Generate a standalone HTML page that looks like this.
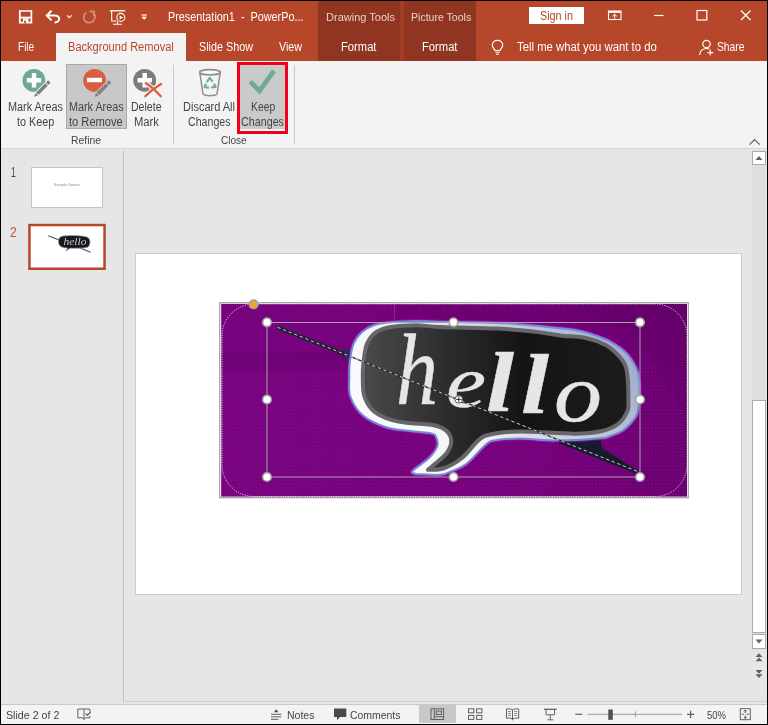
<!DOCTYPE html>
<html lang="en">
<head>
<meta charset="utf-8">
<title>Presentation1 - PowerPoint</title>
<style>
html,body{margin:0;padding:0;}
body{width:768px;height:725px;overflow:hidden;background:#000;font-family:"Liberation Sans",sans-serif;}
#win{position:relative;width:768px;height:725px;overflow:hidden;background:#000;}
#win div, #win svg, #win span{position:absolute;}
.t{white-space:pre;line-height:1;display:block;transform-origin:0 0;}
#titlebar{left:1px;top:1px;width:766px;height:60px;background:#B7472A;}
.ctx{top:1px;height:60px;background:#8F3521;}
#tabsel{left:56px;top:33px;width:130px;height:28px;background:#F3F3F3;}
#ribbon{left:1px;top:61px;width:766px;height:87px;background:#F3F3F3;border-bottom:1px solid #D6D6D6;}
#work{left:1px;top:149px;width:766px;height:555px;background:#E6E6E6;}
#status{left:1px;top:704px;width:766px;height:20px;background:#F3F3F3;border-top:1px solid #C9C9C9;box-sizing:border-box;}
.sep{width:1px;background:#C9C9C9;top:65px;height:79px;}
#selbtn{left:66px;top:64px;width:61px;height:65px;background:#C8C8C8;border:1px solid #A9A9A9;box-sizing:border-box;}
#keepbtn{left:240px;top:65px;width:45px;height:64px;background:#CACACA;}
#redbox{left:237px;top:62px;width:51px;height:72px;border:3px solid #F0001E;box-sizing:border-box;}
#signin{left:529px;top:7px;width:55px;height:17px;background:#fff;}
#divider{left:123px;top:151px;width:1px;height:551px;background:#C2C2C2;}
#hline{left:125px;top:701px;width:642px;height:1px;background:#CFCFCF;}
#slide{left:135px;top:253px;width:607px;height:342px;background:#fff;border:1px solid #CDCDCD;box-sizing:border-box;}
#thumb1{left:31px;top:167px;width:72px;height:41px;background:#fff;border:1px solid #C4C4C4;box-sizing:border-box;}
#thumb2{left:29px;top:225px;width:76px;height:44px;background:#fff;}
#vtrack{left:752px;top:150px;width:14px;height:500px;background:#DEDEDE;}
.sbtn{left:752px;width:14px;background:#fff;border:1px solid #ABABAB;box-sizing:border-box;}
#viewsel{left:418.5px;top:705px;width:37.5px;height:18px;background:#C8C8C8;}
#texts{left:0;top:0;width:768px;height:725px;will-change:transform;transform:translateZ(0);}
#win svg{will-change:transform;}

</style>
</head>
<body>
<div id="win">
<div id="titlebar"></div>
<div class="ctx" style="left:318px;width:81.5px;"></div>
<div class="ctx" style="left:399.5px;width:4px;background:#A43D26;"></div>
<div class="ctx" style="left:403.5px;width:72.5px;"></div>
<div id="tabsel"></div>
<div id="signin"></div>
<div id="ribbon"></div>
<div id="selbtn"></div>
<div id="keepbtn"></div>
<div id="redbox"></div>
<div class="sep" style="left:173px;"></div>
<div class="sep" style="left:294px;"></div>
<div id="work"></div>
<div id="divider"></div>
<div id="hline"></div>
<div id="thumb1"></div>
<div id="thumb2"></div>
<div id="slide"></div>
<div id="vtrack"></div>
<div class="sbtn" style="top:151px;height:14px;"></div>
<div class="sbtn" style="top:400px;height:233px;"></div>
<div class="sbtn" style="top:634px;height:14.5px;"></div>
<div id="status"></div>
<div id="viewsel"></div>
<svg id="icons" style="left:0;top:0" width="768" height="725" viewBox="0 0 768 725">
<!-- ===== Quick access toolbar ===== -->
<g fill="none" stroke="#fff" stroke-width="1.4">
<!-- save -->
<path d="M19.800,11 H31.400 V22.700 H19.800 Z" stroke-width="1.7"/>
<path d="M20,17.600 H31.200" stroke-width="1.8"/>
<path d="M23,18.500 H28.500 V23 H23 Z" fill="#fff" stroke="none"/>
<path d="M24.200,20.400 H25.900 V23.500 H24.200 Z" fill="#B7472A" stroke="none"/>
<!-- undo -->
<path d="M51.500,10.800 L46.800,15.600 L51.500,20.400" stroke-width="2"/>
<path d="M47,15.600 H54.500 C58,15.600 59.500,17.500 59.200,19.300 C59,21 57,22 54.600,22.600" stroke-width="2"/>
<!-- caret -->
<path d="M67,15.300 L69.300,17.600 L71.600,15.300" stroke-width="1.100"/>
<!-- start from beginning -->
<path d="M109.700,10.800 H125.200" stroke-width="1.300"/>
<path d="M111.700,11 V21 H116.500" stroke-width="1.100"/>
<circle cx="120.8" cy="17.4" r="4" stroke-width="1.1"/>
<path d="M117.500,21.500 V23.800 M113,24.300 H122" stroke-width="1.100"/>
<!-- customize -->
<path d="M141.500,15 H146.800" stroke-width="1.200"/>
</g>
<path d="M119.600,15.400 L123.100,17.400 L119.600,19.400 Z" fill="#fff"/>
<path d="M141.300,16.800 H147 L144.150,19.800 Z" fill="#fff"/>
<!-- redo (disabled) -->
<g fill="none" stroke="#CF8C79" stroke-width="1.8">
<path d="M86.500,12.500 C83.500,14.500 82.800,18.500 85,21 C87.500,23.500 92,23 94,20 C95.600,17.500 95,14.500 93,12.500"/>
<path d="M89.500,11.500 H94 V16"/>
</g>
<!-- ===== window controls ===== -->
<g fill="none" stroke="#fff" stroke-width="1.100">
<rect x="608.500" y="11" width="12.500" height="8.500"/>
<path d="M608.500,12 H621" stroke-width="1.800"/>
<path d="M614.700,18.500 V14.500 M612.500,16.300 L614.700,14.200 L616.900,16.300" stroke-width="1"/>
<path d="M654,15.500 H663.500" stroke-width="1.200"/>
<rect x="697" y="10.500" width="9.800" height="9.500" stroke-width="1.200"/>
<path d="M741,10.500 L750.500,20 M750.500,10.500 L741,20" stroke-width="1.200"/>
<!-- lightbulb -->
<path d="M495,50.500 C494.500,48.800 492.300,47.700 492.300,45 C492.300,42.200 494.600,40.300 497.500,40.300 C500.400,40.300 502.700,42.200 502.700,45 C502.700,47.700 500.500,48.800 500,50.500 Z" stroke-width="1.200"/>
<path d="M495.300,52.300 H499.700 M496,54.200 H499" stroke-width="1.100"/>
<!-- share -->
<circle cx="706.500" cy="44" r="3.700" stroke-width="1.200"/>
<path d="M699.600,55 C700,51.500 702.500,48.800 706,48.500 C707.500,48.400 708.500,48.700 709.500,49.200" stroke-width="1.200"/>
<path d="M710.300,49.800 V55.300 M707.500,52.600 H713.200" stroke-width="1.200"/>
</g>
<!-- ===== Ribbon icons ===== -->
<!-- Mark areas to keep -->
<g>
<circle cx="33.900" cy="80.400" r="11.400" fill="#6FA896"/>
<path d="M26.800,80.200 H41.200 M34,72.900 V87.600" stroke="#fff" stroke-width="4.400"/>
<g transform="translate(34.2,96.8) rotate(-45)">
<path d="M-0.8,-2.6 H22.3 V2.6 H-0.8 Z" fill="#F3F3F3" fill-opacity="0.0"/>
<path d="M3.4,-2.7 H22.4 V2.7 H3.4 L-1,0 Z" fill="#F3F3F3"/>
<path d="M0,0 L3.6,-1.75 V1.75 Z" fill="#7A7A7A"/>
<path d="M4.4,-1.75 H17.4 V1.75 H4.4 Z" fill="#808080"/>
<path d="M18.3,-1.75 H21.5 V1.75 H18.3 Z" fill="#808080"/>
</g>
</g>
<!-- Mark areas to remove -->
<g>
<circle cx="94.600" cy="80.400" r="11.400" fill="#DA5E41"/>
<path d="M87,80 H102" stroke="#fff" stroke-width="4.400"/>
<g transform="translate(94.8,96.8) rotate(-45)">
<path d="M-0.8,-2.6 H22.3 V2.6 H-0.8 Z" fill="#F3F3F3" fill-opacity="0.0"/>
<path d="M3.4,-2.7 H22.4 V2.7 H3.4 L-1,0 Z" fill="#C8C8C8"/>
<path d="M0,0 L3.6,-1.75 V1.75 Z" fill="#7A7A7A"/>
<path d="M4.4,-1.75 H17.4 V1.75 H4.4 Z" fill="#808080"/>
<path d="M18.3,-1.75 H21.5 V1.75 H18.3 Z" fill="#808080"/>
</g>
</g>
<!-- Delete mark -->
<g>
<circle cx="144.700" cy="80.300" r="11.400" fill="#7C7C7C"/>
<path d="M137.500,80.200 H152 M144.700,72.900 V87.600" stroke="#fff" stroke-width="4.400"/>
<path d="M146,83.300 C151,86.500 156,91 160.800,96.300 M161,84 C156,87 150,91.500 145.300,96.300" stroke="#F3F3F3" stroke-width="4.600" fill="none" stroke-linecap="round"/>
<path d="M146,83.300 C151,86.500 156,91 160.800,96.300 M161,84 C156,87 150,91.500 145.300,96.300" stroke="#DA5E41" stroke-width="2.300" fill="none" stroke-linecap="round"/>
</g>
<!-- Discard all changes (trash) -->
<g>
<path d="M199.800,72.500 L203,94 C205,96.300 215,96.300 217,94 L220.200,72.500 Z" fill="#F4F4F4" stroke="#8E8E8E" stroke-width="1.5"/>
<ellipse cx="210" cy="72.300" rx="10.300" ry="2.600" fill="#FAFAFA" stroke="#8E8E8E" stroke-width="1.8"/>
<g fill="none" stroke="#74AE9A" stroke-width="2.2" stroke-linejoin="round">
<path d="M206.800,82 L209.800,77.800 L212.600,81.600"/>
<path d="M213.800,83.600 L215.600,86.800 L211,87.500"/>
<path d="M209,87.600 L204.600,87.200 L206,83.600"/>
</g>
</g>
<!-- Keep changes (check) -->
<path d="M250.2,81.6 L259.6,90.8 L273.9,70.9" fill="none" stroke="#72A896" stroke-width="4.8"/>
<!-- collapse ribbon -->
<path d="M749.500,144.700 L754.600,139.500 L759.700,144.700" fill="none" stroke="#5E5E5E" stroke-width="1.200"/>
<!-- ===== scrollbar arrows ===== -->
<g fill="#606060">
<path d="M755.500,160 L759,156 L762.500,160 Z"/>
<path d="M755.500,639.500 L759,643.500 L762.500,639.500 Z"/>
<path d="M755.500,657 L759,653.300 L762.500,657 Z M755.500,661.300 L759,657.600 L762.500,661.300 Z"/>
<path d="M755.500,670 L759,673.700 L762.500,670 Z M755.500,674.200 L759,677.900 L762.500,674.200 Z"/>
</g>
<!-- ===== slide thumbnails ===== -->
<g>
<rect x="29.45" y="225.05" width="75.1" height="43.7" fill="#fff" stroke="#B7472A" stroke-width="2.5"/>
<path d="M48.300,235.800 L90.700,252.200" stroke="#222" stroke-width="0.9"/>
<path d="M62,236.200 C70,235 82,235.500 87,237 C91,238.500 91,246 87,247.500 C82,248.500 72,248.300 70,248.300 L66,251 L67.500,248 C63,248 59.500,247 58.500,243 C58,239.500 59,237 62,236.200 Z" fill="#16181c" stroke="#9AA6C8" stroke-width="0.8"/>
<text x="63.5" y="245.3" font-family="'Liberation Serif',serif" font-style="italic" font-size="9.5" fill="#c8c8c8" textLength="23" lengthAdjust="spacingAndGlyphs">hello</text>
</g>
<!-- ===== status bar icons ===== -->
<g fill="none" stroke="#606060" stroke-width="1">
<!-- spell check book -->
<path d="M84,709 V719.600 M84,709 H77.800 V717.800 H82.600 L84,719.400 L85.400,717.800 H89.800 V716 M84,709 H89.800 V711"/>
<path d="M85.700,713.500 L87.500,715.400 L91,711.500" stroke-width="1.2"/>
<!-- notes -->
<path d="M271,714.300 H281.400 M271,716.800 H281.400 M271,719.300 H278.500"/>
<!-- normal view -->
<rect x="431" y="708.800" width="12.600" height="10.700"/>
<path d="M434.300,709 V719.500 M434.300,716.700 H443.500"/>
<rect x="436.300" y="711" width="5.200" height="3.400"/>
<!-- sorter -->
<rect x="468.500" y="708.800" width="5.300" height="4"/><rect x="476.600" y="708.800" width="5.300" height="4"/>
<rect x="468.500" y="715.400" width="5.300" height="4"/><rect x="476.600" y="715.400" width="5.300" height="4"/>
<!-- reading view -->
<path d="M512.500,709.800 C510.500,708.700 508.500,708.600 506.500,709 V718.300 C508.500,717.900 510.500,718 512.500,719 Z M512.500,709.800 C514.500,708.700 516.500,708.600 518.700,709 V718.300 C516.500,717.900 514.500,718 512.500,719"/>
<path d="M508,711.500 H511 M508,713.500 H511 M508,715.500 H511 M514.200,711.500 H517.200 M514.200,713.500 H517.200 M514.200,715.500 H517.200" stroke-width="0.7"/>
<path d="M512.500,719 V720.300"/>
<!-- slideshow -->
<path d="M544,709.300 H556.600" stroke-width="1.300"/>
<path d="M546,709.500 V714.800 H554.600 V709.500"/>
<path d="M550.300,714.800 V719.400 M547.500,719.800 H553.100"/>
<!-- zoom -->
<path d="M575.300,714.300 H582.200" stroke-width="1.200"/>
<path d="M587.600,714.300 H682" stroke="#9A9A9A"/>
<path d="M635.300,711.300 V717.300" stroke="#9A9A9A"/>
<path d="M687,714.300 H694.200 M690.600,710.700 V717.900" stroke-width="1.200"/>
<!-- fit -->
<rect x="740.300" y="708.700" width="10" height="11"/>
</g>
<path d="M274,712.300 L276.200,709.300 L278.400,712.300 Z" fill="#4A4A4A"/>
<path d="M334,708.500 H346.300 V717 H340 L337,720.300 V717 H334 Z" fill="#4A4A4A"/>
<rect x="608.300" y="709.500" width="4.500" height="10.300" fill="#505050"/>
<g stroke="#4A4A4A" stroke-width="0.9" fill="none">
<path d="M745.300,710 V713 M744,711.300 L745.300,710 L746.600,711.300 M745.300,718.400 V715.400 M744,717.100 L745.300,718.400 L746.600,717.100 M741.600,714.200 H744 M749,714.200 H746.600"/>
</g>
</svg>

<svg id="pic" style="left:0;top:0" width="768" height="725" viewBox="0 0 768 725">
<defs>
<linearGradient id="bubg" x1="0" y1="0" x2="1" y2="0">
<stop offset="0" stop-color="#4a4a4a"/><stop offset="0.35" stop-color="#2a2a2a"/><stop offset="0.6" stop-color="#141414"/><stop offset="1" stop-color="#1c1c1c"/>
</linearGradient>
<linearGradient id="purp" x1="0" y1="0" x2="1" y2="0">
<stop offset="0" stop-color="#78037E"/><stop offset="0.7" stop-color="#74007A"/><stop offset="1" stop-color="#69006F"/>
</linearGradient>
<pattern id="dots" width="3.5" height="3.5" patternUnits="userSpaceOnUse"><circle cx="1" cy="1" r="0.9" fill="#9A14A2" fill-opacity="0.28"/></pattern>
<linearGradient id="rim" gradientUnits="userSpaceOnUse" x1="600" y1="320" x2="400" y2="450">
<stop offset="0" stop-color="#A3AFCC"/><stop offset="0.35" stop-color="#C9CEDC"/><stop offset="0.7" stop-color="#F2F3F7"/><stop offset="1" stop-color="#FAFAFC"/>
</linearGradient>
<clipPath id="picclip"><rect x="221.2" y="303.9" width="465.8" height="192.7"/></clipPath>
</defs>
<!-- picture frame -->
<rect x="219.7" y="302.7" width="468.6" height="195" fill="#fff" stroke="#9C9C9C" stroke-width="1.2"/>
<rect x="221.2" y="303.9" width="465.8" height="192.7" fill="url(#purp)"/>
<g clip-path="url(#picclip)">
<rect x="221" y="362" width="467" height="135" fill="url(#dots)"/>
<rect x="221" y="352" width="130" height="20" fill="#65006B" opacity="0.3"/>
<polygon points="575,304 688,304 688,420 640,340" fill="#640069" opacity="0.5"/>
<rect x="395" y="303" width="294" height="20" fill="#5C0063" opacity="0.28"/>
<path d="M394.500,304 V321" stroke="#C41CCB" stroke-opacity="0.6" stroke-width="1.2"/>
<!-- dark pointer behind bubble -->
<path d="M278.5,327.7 L348,355.5" stroke="#1D2335" stroke-width="3.8" stroke-linecap="round" fill="none"/>
<path d="M343.500,348.500 L349,347.500 L350.500,359.500 L345.500,360.500 Z" fill="#22305A" opacity="0.9"/>
<path d="M553,437 L600,436 L602,448 L641,473 L636,473.500 L553,441 Z" fill="#161C2C"/>
<!-- speech bubble -->
<g id="bubble">
<path d="M415.0,473.9 C414.6,473.4 410.4,473.5 412.7,470.9 C415.0,468.2 424.9,462.1 429.0,458.0 C433.1,453.9 436.1,449.7 437.3,446.2 C438.5,442.7 437.0,439.0 436.0,436.9 C435.0,434.8 435.7,434.4 431.4,433.4 C427.1,432.4 417.7,432.0 410.3,431.0 C402.9,430.0 394.7,430.0 386.9,427.5 C379.1,425.0 369.5,420.9 363.4,415.8 C357.3,410.7 352.9,403.5 350.5,397.0 C348.1,390.5 349.4,382.8 349.3,377.0 C349.2,371.2 349.1,367.5 349.8,362.0 C350.5,356.5 351.5,349.0 353.5,344.0 C355.5,339.0 358.6,335.1 362.0,332.0 C365.4,328.9 369.2,326.8 374.0,325.2 C378.8,323.6 384.0,322.9 391.0,322.2 C398.0,321.5 407.8,321.1 416.0,321.0 C424.2,320.9 426.4,321.5 440.0,321.8 C453.6,322.1 482.0,322.4 497.5,323.0 C513.0,323.6 522.6,324.5 533.0,325.4 C543.4,326.3 552.2,327.3 560.0,328.2 C567.8,329.1 573.0,329.4 579.5,330.8 C586.0,332.2 593.6,334.8 599.0,336.7 C604.4,338.6 607.7,340.0 612.0,342.5 C616.3,345.0 621.5,348.4 625.0,351.7 C628.5,354.9 630.8,358.5 633.0,362.0 C635.2,365.5 636.9,368.7 638.0,372.5 C639.1,376.3 639.3,380.4 639.5,385.0 C639.7,389.6 639.9,395.1 639.4,400.0 C638.9,404.9 638.3,410.6 636.7,414.6 C635.1,418.6 632.5,421.3 630.0,424.0 C627.5,426.7 625.3,429.0 622.0,431.0 C618.7,433.0 613.6,434.8 610.0,436.0 C606.4,437.2 609.1,437.6 600.2,438.3 C591.3,439.1 569.9,440.5 556.5,440.5 C543.1,440.5 530.3,438.5 520.0,438.5 C509.7,438.5 500.5,439.3 494.7,440.4 C488.9,441.5 490.0,441.1 485.3,445.0 C480.6,448.9 472.2,459.5 466.6,463.8 C461.1,468.1 456.3,469.2 452.0,471.0 C447.7,472.8 447.0,474.3 440.8,474.8 C434.6,475.3 419.3,474.0 415.0,473.9 Z" fill="none" stroke="#C400C8" stroke-opacity="0.55" stroke-width="4" stroke-linejoin="round"/>
<path d="M415.0,473.9 C414.6,473.4 410.4,473.5 412.7,470.9 C415.0,468.2 424.9,462.1 429.0,458.0 C433.1,453.9 436.1,449.7 437.3,446.2 C438.5,442.7 437.0,439.0 436.0,436.9 C435.0,434.8 435.7,434.4 431.4,433.4 C427.1,432.4 417.7,432.0 410.3,431.0 C402.9,430.0 394.7,430.0 386.9,427.5 C379.1,425.0 369.5,420.9 363.4,415.8 C357.3,410.7 352.9,403.5 350.5,397.0 C348.1,390.5 349.4,382.8 349.3,377.0 C349.2,371.2 349.1,367.5 349.8,362.0 C350.5,356.5 351.5,349.0 353.5,344.0 C355.5,339.0 358.6,335.1 362.0,332.0 C365.4,328.9 369.2,326.8 374.0,325.2 C378.8,323.6 384.0,322.9 391.0,322.2 C398.0,321.5 407.8,321.1 416.0,321.0 C424.2,320.9 426.4,321.5 440.0,321.8 C453.6,322.1 482.0,322.4 497.5,323.0 C513.0,323.6 522.6,324.5 533.0,325.4 C543.4,326.3 552.2,327.3 560.0,328.2 C567.8,329.1 573.0,329.4 579.5,330.8 C586.0,332.2 593.6,334.8 599.0,336.7 C604.4,338.6 607.7,340.0 612.0,342.5 C616.3,345.0 621.5,348.4 625.0,351.7 C628.5,354.9 630.8,358.5 633.0,362.0 C635.2,365.5 636.9,368.7 638.0,372.5 C639.1,376.3 639.3,380.4 639.5,385.0 C639.7,389.6 639.9,395.1 639.4,400.0 C638.9,404.9 638.3,410.6 636.7,414.6 C635.1,418.6 632.5,421.3 630.0,424.0 C627.5,426.7 625.3,429.0 622.0,431.0 C618.7,433.0 613.6,434.8 610.0,436.0 C606.4,437.2 609.1,437.6 600.2,438.3 C591.3,439.1 569.9,440.5 556.5,440.5 C543.1,440.5 530.3,438.5 520.0,438.5 C509.7,438.5 500.5,439.3 494.7,440.4 C488.9,441.5 490.0,441.1 485.3,445.0 C480.6,448.9 472.2,459.5 466.6,463.8 C461.1,468.1 456.3,469.2 452.0,471.0 C447.7,472.8 447.0,474.3 440.8,474.8 C434.6,475.3 419.3,474.0 415.0,473.9 Z" fill="url(#rim)" stroke="#6E8ED2" stroke-width="2" stroke-linejoin="round"/>
<path d="M427.9,469.7 C428.9,468.9 430.6,467.7 433.7,465.0 C436.8,462.3 443.7,457.2 446.6,453.3 C449.5,449.4 451.3,445.3 451.3,441.6 C451.3,437.9 449.5,433.7 446.6,431.0 C443.7,428.3 441.7,426.8 433.7,425.2 C425.7,423.6 408.4,423.8 398.6,421.6 C388.9,419.5 380.9,416.4 375.2,412.3 C369.5,408.2 366.7,402.8 364.6,397.0 C362.5,391.2 363.0,383.7 362.8,377.7 C362.6,371.7 363.0,366.4 363.7,360.8 C364.4,355.2 364.9,348.7 367.0,343.9 C369.1,339.1 372.4,334.8 376.4,332.0 C380.4,329.2 384.2,328.1 390.8,327.0 C397.4,325.9 407.8,325.2 416.0,325.2 C424.2,325.2 426.4,326.4 440.0,327.0 C453.6,327.6 482.0,327.9 497.5,328.6 C513.0,329.4 522.6,330.4 533.0,331.5 C543.4,332.6 551.2,334.3 560.0,335.4 C568.8,336.5 578.4,336.4 586.0,338.0 C593.6,339.6 600.4,342.3 605.6,345.0 C610.8,347.7 614.1,351.0 617.3,354.3 C620.5,357.6 623.3,360.8 625.0,364.7 C626.7,368.6 627.1,371.8 627.7,377.7 C628.3,383.6 628.4,394.4 628.4,400.0 C628.4,405.6 629.2,407.1 627.5,411.0 C625.8,414.9 622.6,420.4 618.4,423.7 C614.1,427.0 609.3,429.3 602.0,431.0 C594.7,432.7 588.4,433.6 574.7,433.7 C561.0,433.8 534.1,431.4 520.0,431.5 C505.9,431.6 496.9,433.0 490.0,434.5 C483.1,436.0 483.0,436.5 478.3,440.4 C473.6,444.3 467.8,453.3 461.9,458.0 C456.0,462.7 448.8,466.6 443.1,468.5 C437.4,470.4 430.4,469.5 427.9,469.7 Z" fill="url(#bubg)" stroke="#66666C" stroke-width="4" stroke-linejoin="round"/>
</g>
<!-- hello -->
<text font-family="'Liberation Serif',serif" font-style="italic" fill="#E6E6E6" stroke="#DCDCDC" stroke-width="0.5"><tspan x="396" y="404" font-size="102" textLength="42" lengthAdjust="spacingAndGlyphs">h</tspan><tspan x="446" y="406.500" font-size="74" textLength="40" lengthAdjust="spacingAndGlyphs">e</tspan><tspan x="486" y="411" font-size="84" font-weight="bold" textLength="28" lengthAdjust="spacingAndGlyphs">l</tspan><tspan x="521" y="413" font-size="84" font-weight="bold" textLength="28" lengthAdjust="spacingAndGlyphs">l</tspan><tspan x="554" y="421" font-size="82" textLength="48" lengthAdjust="spacingAndGlyphs">o</tspan></text>
</g>
<!-- dotted rounded marquee -->
<rect x="222" y="304" width="465" height="192.500" rx="32" ry="32" fill="none" stroke="#fff" stroke-opacity="0.75" stroke-width="1" stroke-dasharray="1.2 1.2"/>
<!-- dashed line across -->
<path d="M277.5,327.3 L640,472.5" stroke="#20242E" stroke-width="1.3" fill="none"/>
<path d="M277.5,327.3 L640,472.5" stroke="#fff" stroke-opacity="0.8" stroke-width="0.95" stroke-dasharray="3.2 2.8" fill="none"/>
<!-- selection rectangle -->
<rect x="267" y="322.500" width="373" height="154.500" fill="none" stroke="#A6A6A6" stroke-width="1"/>
<g fill="#fff" stroke="#A3A3A3" stroke-width="1.6">
<circle cx="267" cy="322.300" r="4.3"/><circle cx="453.500" cy="322.300" r="4.3"/><circle cx="640" cy="322.300" r="4.3"/>
<circle cx="267" cy="399.500" r="4.3"/><circle cx="640" cy="399.500" r="4.3"/>
<circle cx="267" cy="477" r="4.3"/><circle cx="453.500" cy="477" r="4.3"/><circle cx="640" cy="477" r="4.3"/>
</g>
<circle cx="253.600" cy="304.400" r="4.300" fill="#F5A623" stroke="#A3A3A3" stroke-width="1.6"/>
<!-- crosshair cursor -->
<circle cx="458.800" cy="399.400" r="3.800" fill="#fff" stroke="#333" stroke-width="0.8"/>
<path d="M456,399.400 H461.600 M458.800,396.600 V402.200" stroke="#222" stroke-width="0.9"/>
</svg>


<div id="texts">
<span class="t" id="t0" style="left:167.50px;top:11.24px;font-size:12px;color:#fff;transform:scaleX(0.9029);">Presentation1  -  PowerPo...</span>
<span class="t" id="t1" style="left:325.50px;top:11.59px;font-size:11px;color:#E9CFC8;transform:scaleX(1.0016);">Drawing Tools</span>
<span class="t" id="t2" style="left:410.50px;top:11.59px;font-size:11px;color:#E9CFC8;transform:scaleX(0.9589);">Picture Tools</span>
<span class="t" id="t3" style="left:540.00px;top:9.74px;font-size:12px;color:#B7472A;transform:scaleX(0.8991);">Sign in</span>
<span class="t" id="t4" style="left:17.50px;top:41.24px;font-size:12px;color:#fff;transform:scaleX(0.8375);">File</span>
<span class="t" id="t5" style="left:67.50px;top:41.24px;font-size:12px;color:#B7472A;transform:scaleX(0.9221);">Background Removal</span>
<span class="t" id="t6" style="left:199.00px;top:41.24px;font-size:12px;color:#fff;transform:scaleX(0.8993);">Slide Show</span>
<span class="t" id="t7" style="left:279.00px;top:41.24px;font-size:12px;color:#fff;transform:scaleX(0.8916);">View</span>
<span class="t" id="t8" style="left:340.50px;top:41.24px;font-size:12px;color:#fff;transform:scaleX(0.9338);">Format</span>
<span class="t" id="t9" style="left:421.50px;top:41.24px;font-size:12px;color:#fff;transform:scaleX(0.9338);">Format</span>
<span class="t" id="t10" style="left:516.70px;top:41.24px;font-size:12px;color:#fff;transform:scaleX(0.9441);">Tell me what you want to do</span>
<span class="t" id="t11" style="left:717.00px;top:41.24px;font-size:12px;color:#fff;transform:scaleX(0.8585);">Share</span>
<span class="t" id="t12" style="left:8.00px;top:101.24px;font-size:12px;color:#444;transform:scaleX(0.9063);">Mark Areas</span>
<span class="t" id="t13" style="left:17.20px;top:116.24px;font-size:12px;color:#444;transform:scaleX(0.9015);">to Keep</span>
<span class="t" id="t14" style="left:68.70px;top:101.24px;font-size:12px;color:#444;transform:scaleX(0.8997);">Mark Areas</span>
<span class="t" id="t15" style="left:69.20px;top:116.24px;font-size:12px;color:#444;transform:scaleX(0.9271);">to Remove</span>
<span class="t" id="t16" style="left:130.80px;top:101.24px;font-size:12px;color:#444;transform:scaleX(0.8793);">Delete</span>
<span class="t" id="t17" style="left:133.80px;top:116.24px;font-size:12px;color:#444;transform:scaleX(0.9336);">Mark</span>
<span class="t" id="t18" style="left:183.30px;top:101.24px;font-size:12px;color:#444;transform:scaleX(0.9173);">Discard All</span>
<span class="t" id="t19" style="left:188.30px;top:116.24px;font-size:12px;color:#444;transform:scaleX(0.8846);">Changes</span>
<span class="t" id="t20" style="left:250.50px;top:101.24px;font-size:12px;color:#444;transform:scaleX(0.8633);">Keep</span>
<span class="t" id="t21" style="left:241.30px;top:116.24px;font-size:12px;color:#444;transform:scaleX(0.8950);">Changes</span>
<span class="t" id="t22" style="left:70.50px;top:135.17px;font-size:11.5px;color:#444;transform:scaleX(0.9023);">Refine</span>
<span class="t" id="t23" style="left:220.60px;top:135.17px;font-size:11.5px;color:#444;transform:scaleX(0.8740);">Close</span>
<span class="t" id="t24" style="left:10.60px;top:165.05px;font-size:14px;color:#444;transform:scaleX(0.6156);">1</span>
<span class="t" id="t25" style="left:9.70px;top:224.55px;font-size:14px;color:#C9502F;transform:scaleX(0.8593);">2</span>
<span class="t" id="t26" style="left:54.00px;top:183.01px;font-size:4px;color:#8a8a9a;transform:scaleX(0.9428);">Sample Games</span>
<span class="t" id="t27" style="left:5.80px;top:709.59px;font-size:11px;color:#444;transform:scaleX(0.9701);">Slide 2 of 2</span>
<span class="t" id="t28" style="left:286.80px;top:710.09px;font-size:11px;color:#444;transform:scaleX(0.9565);">Notes</span>
<span class="t" id="t29" style="left:349.70px;top:710.09px;font-size:11px;color:#444;transform:scaleX(0.9495);">Comments</span>
<span class="t" id="t30" style="left:707.00px;top:709.59px;font-size:11px;color:#444;transform:scaleX(0.8624);">50%</span>
</div>
</div>
</body>
</html>
